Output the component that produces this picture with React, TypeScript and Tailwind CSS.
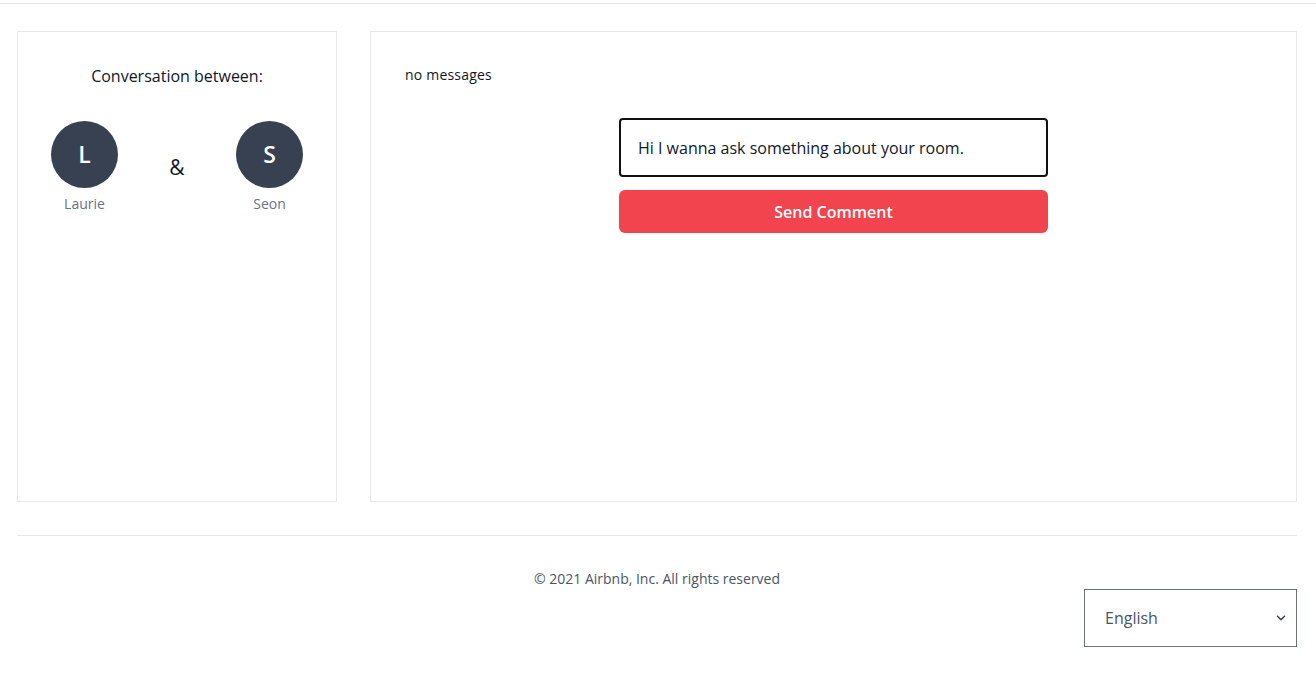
import React from "react";
import { ChevronDown } from "lucide-react";

const font = { fontFamily: '"Open Sans", "Noto Sans", sans-serif' };

function Avatar({ letter, name }: { letter: string; name: string }) {
  return (
    <div className="flex flex-col items-center">
      <div className="w-[67px] h-[67px] rounded-full bg-[#374151] text-white flex items-center justify-center text-[23px] font-semibold">
        {letter}
      </div>
      <span className="mt-[9px] text-[14px] text-gray-500 leading-none">{name}</span>
    </div>
  );
}

export default function App() {
  return (
    <div className="min-h-screen bg-white text-gray-900" style={font}>
      {/* header remnant */}
      <div className="h-[4px] border-b border-gray-200" />

      <main className="pl-[17px] pr-[19px] pt-[27px]">
        <div className="flex gap-[33px] h-[471px]">
          {/* participants */}
          <section className="w-[320px] shrink-0 border border-gray-200 flex flex-col items-center pt-[36px]">
            <h3 className="text-[16px] leading-none">Conversation between:</h3>
            <div className="mt-[37px] w-full flex items-start justify-between px-[33px]">
              <Avatar letter="L" name="Laurie" />
              <span className="mt-[36px] text-[21px] leading-none">&amp;</span>
              <Avatar letter="S" name="Seon" />
            </div>
          </section>

          {/* messages */}
          <section className="flex-1 border border-gray-200 px-[34px] pt-[36px]">
            <p className="text-[14px] leading-none tracking-[0.2px]">no messages</p>
            <form className="mt-[36px] mx-auto w-[429px] flex flex-col gap-[13px]">
              <input
                defaultValue="Hi I wanna ask something about your room."
                className="h-[59px] w-full border-2 border-[#111] rounded-[4px] px-[17px] text-[16px] outline-none"
                style={font}
              />
              <button
                type="button"
                className="h-[43px] w-full rounded-[6px] bg-[#f2444e] text-white text-[16px] font-semibold"
                style={font}
              >
                Send Comment
              </button>
            </form>
          </section>
        </div>

        <footer className="mt-[33px] border-t border-gray-200 pt-[36px]">
          <p className="text-center text-[14px] text-gray-600 leading-none">
            © 2021 Airbnb, Inc. All rights reserved
          </p>
          <div className="flex justify-end mt-[3px]">
            <div className="w-[213px] h-[58px] border border-gray-500 flex items-center justify-between pl-[20px] pr-[8px] text-[16px] text-gray-600">
              <span>English</span>
              <ChevronDown className="w-[14px] h-[14px] text-gray-700" strokeWidth={2.5} />
            </div>
          </div>
        </footer>
      </main>
    </div>
  );
}
